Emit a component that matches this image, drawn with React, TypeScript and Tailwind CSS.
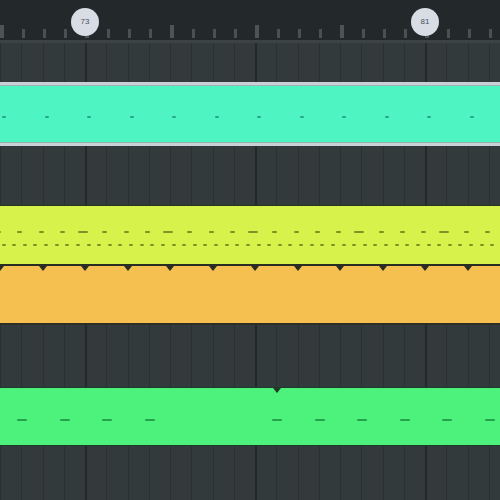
import React from 'react';

const COLS = Array.from({ length: 24 }, (_, i) => i);

// Empty lane: dark background with beat lines, darker bar line every 8 columns
const GridLane = ({ h }: { h: string }) => (
  <div className={`flex overflow-hidden bg-[#333a3c] ${h}`}>
    {COLS.map(i => (
      <div
        key={i}
        className={
          i % 8 === 4
            ? 'w-[21.25px] shrink-0 border-l-2 border-[#232829]'
            : 'w-[21.25px] shrink-0 border-l border-[#2b3133]'
        }
      />
    ))}
  </div>
);

// Row of evenly spaced note dashes
const DashRow = ({ count, slot, dash, color, offset }: { count: number; slot: string; dash: string; color: string; offset: string }) => (
  <div className={`flex ${offset}`}>
    {Array.from({ length: count }, (_, k) => (
      <div key={k} className={`shrink-0 ${slot}`}>
        <div className={`h-[2px] rounded-[1px] ${dash} ${color}`} />
      </div>
    ))}
  </div>
);

const LONG = [4, 8, 12, 17, 21];
const GREEN_EMPTY = [4, 5];

const Notches = ({ count, offset }: { count: number; offset: string }) => (
  <div className={`absolute inset-x-0 top-0 flex ${offset}`}>
    {Array.from({ length: count }, (_, k) => (
      <div key={k} className="w-[42.5px] shrink-0">
        <div className="h-0 w-0 border-x-[4px] border-t-[5px] border-x-transparent border-t-[#2a2d22]" />
      </div>
    ))}
  </div>
);

export default function App() {
  return (
    <div className="relative h-[500px] w-[500px] overflow-hidden bg-[#333a3c] font-['Liberation_Sans',Arial,sans-serif]">
      {/* Ruler */}
      <div className="relative h-[40px] bg-[#23292b]">
        <div className="flex h-full items-end pb-[2px]">
          {COLS.map(i => (
            <div key={i} className="flex h-full w-[21.25px] shrink-0 items-end">
              {i % 4 === 0 ? (
                <div className="h-[13px] w-[4px] bg-[#4c5456]" />
              ) : (
                <div className="ml-[0.5px] h-[9px] w-[3px] bg-[#485052]" />
              )}
            </div>
          ))}
        </div>
        <div className="absolute left-[71px] top-[8px] flex h-[28px] w-[28px] items-center justify-center rounded-full bg-[#d8dce5] text-[8px] text-[#4b5056]">
          73
        </div>
        <div className="absolute left-[411px] top-[8px] flex h-[28px] w-[28px] items-center justify-center rounded-full bg-[#d8dce5] text-[8px] text-[#4b5056]">
          81
        </div>
      </div>
      <div className="h-[3px] bg-[#3c4345]" />

      <GridLane h="h-[39px]" />

      {/* Cyan clip */}
      <div className="h-[3px] bg-[#c9d0d6]" />
      <div className="h-px bg-[#9fb3b4]" />
      <div className="flex h-[56px] flex-col justify-center bg-[#4ef5c2] pt-[5px]">
        <DashRow count={12} slot="w-[42.5px]" dash="w-[4px]" color="bg-[#25a886]" offset="ml-[2px]" />
      </div>
      <div className="h-px bg-[#8fb2aa]" />
      <div className="h-[3px] bg-[#c9d0d6]" />

      <GridLane h="h-[59px]" />

      {/* Yellow clip */}
      <div className="h-px bg-[#2b3120]" />
      <div className="flex h-[58px] flex-col gap-[11px] bg-[#d7f34b] pt-[25px]">
        <div className="-ml-[4px] flex">
          {COLS.map(k => (
            <div key={k} className="w-[21.25px] shrink-0">
              {LONG.includes(k) ? (
                <div className="-ml-[3px] h-[2px] w-[10px] rounded-[1px] bg-[#7f9226]" />
              ) : (
                <div className="h-[2px] w-[5px] rounded-[1px] bg-[#7f9226]" />
              )}
            </div>
          ))}
        </div>
        <DashRow count={48} slot="w-[10.625px]" dash="w-[4px]" color="bg-[#7f9226]" offset="ml-[1.5px]" />
      </div>

      {/* Orange clip */}
      <div className="h-[2px] bg-[#2a2d22]" />
      <div className="relative h-[57px] bg-[#f5c04f]">
        <Notches count={12} offset="-ml-[4px]" />
      </div>
      <div className="h-[2px] bg-[#2f2e24]" />

      <GridLane h="h-[62px]" />

      {/* Green clip */}
      <div className="h-px bg-[#1f3a28]" />
      <div className="relative flex h-[57px] flex-col justify-center bg-[#4cf27b] pt-[6px]">
        <div className="absolute left-[273px] top-0 h-0 w-0 border-x-[4px] border-t-[5px] border-x-transparent border-t-[#1f3a28]" />
        <div className="ml-[17px] flex">
          {Array.from({ length: 12 }, (_, k) => (
            <div key={k} className="w-[42.5px] shrink-0">
              {!GREEN_EMPTY.includes(k) && <div className="h-[2px] w-[10px] rounded-[1px] bg-[#24a24c]" />}
            </div>
          ))}
        </div>
      </div>
      <div className="h-px bg-[#1f3a28]" />

      <GridLane h="h-[60px]" />
    </div>
  );
}
